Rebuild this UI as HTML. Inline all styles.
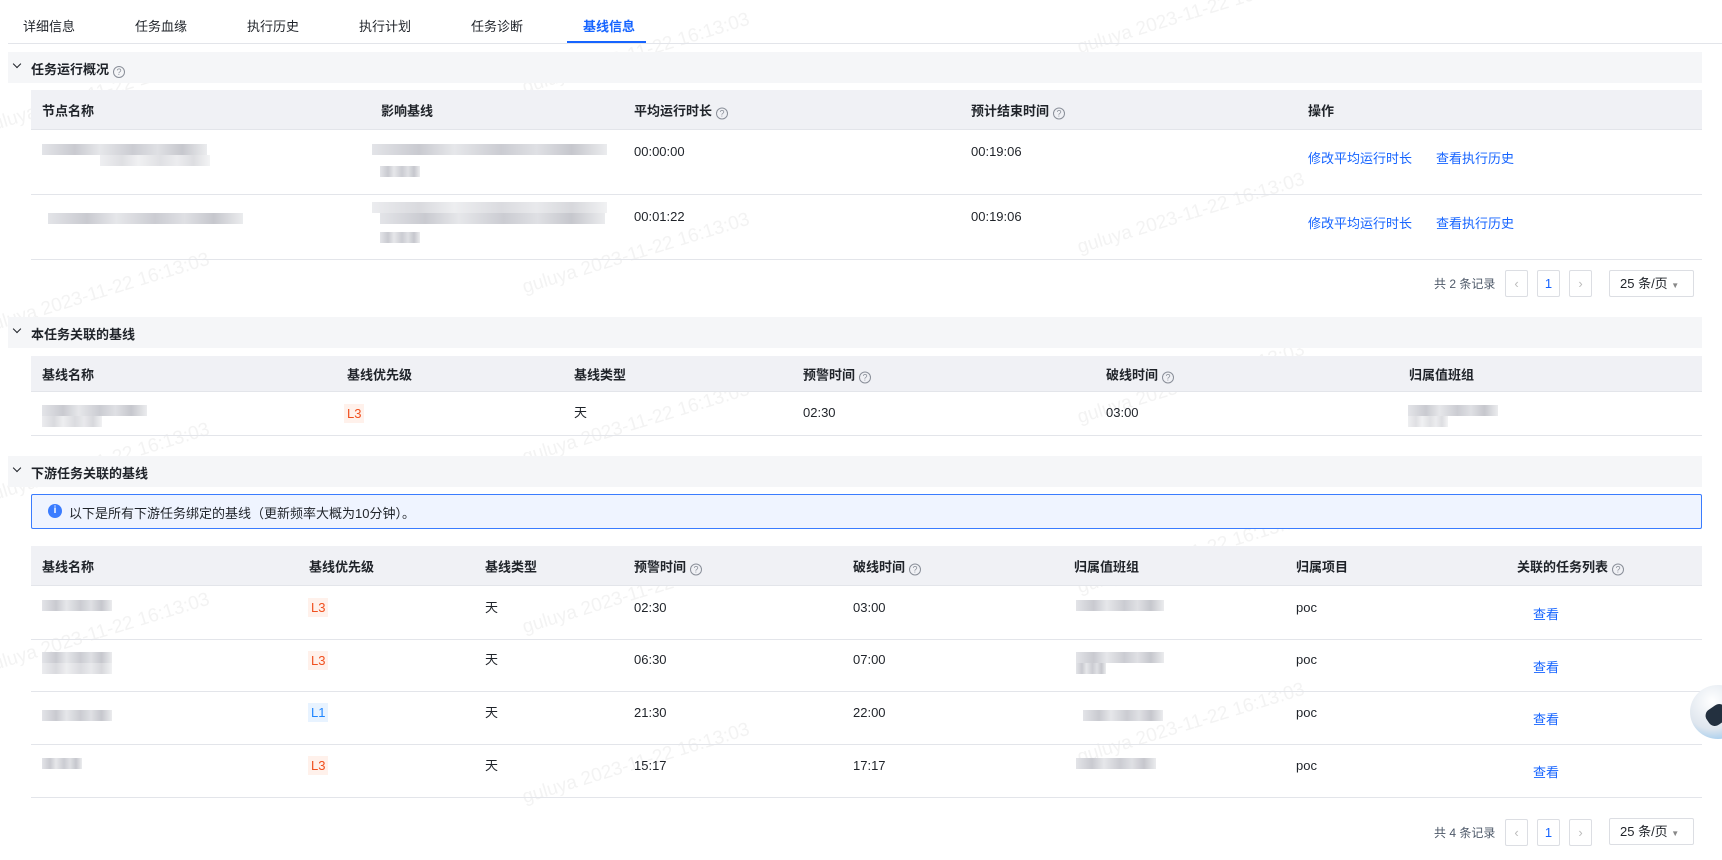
<!DOCTYPE html>
<html><head><meta charset="utf-8">
<style>
*{margin:0;padding:0;box-sizing:border-box}
body{width:1722px;height:860px;background:#fff;font-family:"Liberation Sans","Noto Sans CJK SC",sans-serif;font-size:13px;color:#1f2329;position:relative;overflow:hidden}
.a{position:absolute;white-space:nowrap}
.tab{position:absolute;top:16px;font-size:13px;color:#1f2329}
.band{position:absolute;left:8px;width:1694px;height:31px;background:#f5f6f8}
.band .t{position:absolute;left:23px;top:7px;font-size:13px;font-weight:600;color:#1f2329}
.chev{position:absolute;left:6px;top:9px;width:6px;height:6px;border-right:1.6px solid #1f2329;border-bottom:1.6px solid #1f2329;transform:rotate(45deg)}
.th{position:absolute;left:31px;width:1671px;background:#f0f1f5;border-bottom:1px solid #e3e5ea}
.th span{position:absolute;font-weight:600;font-size:13px;top:50%;transform:translateY(-50%)}
.line{position:absolute;left:31px;width:1671px;height:1px;background:#e3e5ea}
.q{display:inline-block;width:12px;height:12px;border:1px solid #8a8f99;border-radius:50%;font-size:9px;line-height:10px;text-align:center;color:#8a8f99;font-weight:400;vertical-align:-1px;margin-left:4px;font-style:normal}
.lnk{color:#1664ff}
.tag{position:absolute;padding:1px 3px;font-size:13px;line-height:17px}
.l3{background:#fff1eb;color:#f0501f}
.l1{background:#e8f3ff;color:#1f86ff}
.blur{position:absolute;height:11px;background:linear-gradient(90deg,#e3e4e8,#c9cad0 20%,#e6e7ea 35%,#cbccd2 55%,#dfe0e4 70%,#c6c7cd 85%,#ebecee)}
.pg{position:absolute;height:27px;border:1px solid #dcdee3;border-radius:2px;background:#fff;text-align:center;line-height:25px;color:#bbb}
.wm{position:absolute;color:#f3f3f3;font-size:19px;transform:rotate(-17deg);transform-origin:left top;white-space:nowrap}
.d{top:-3px;position:relative}
</style></head><body>

<div class="wm" style="left:-20px;top:118px">guluya 2023-11-22 16:13:03</div>
<div class="wm" style="left:520px;top:78px">guluya 2023-11-22 16:13:03</div>
<div class="wm" style="left:1075px;top:38px">guluya 2023-11-22 16:13:03</div>
<div class="wm" style="left:-20px;top:318px">guluya 2023-11-22 16:13:03</div>
<div class="wm" style="left:520px;top:278px">guluya 2023-11-22 16:13:03</div>
<div class="wm" style="left:1075px;top:238px">guluya 2023-11-22 16:13:03</div>
<div class="wm" style="left:-20px;top:488px">guluya 2023-11-22 16:13:03</div>
<div class="wm" style="left:520px;top:448px">guluya 2023-11-22 16:13:03</div>
<div class="wm" style="left:1075px;top:408px">guluya 2023-11-22 16:13:03</div>
<div class="wm" style="left:-20px;top:658px">guluya 2023-11-22 16:13:03</div>
<div class="wm" style="left:520px;top:618px">guluya 2023-11-22 16:13:03</div>
<div class="wm" style="left:1075px;top:578px">guluya 2023-11-22 16:13:03</div>
<div class="wm" style="left:520px;top:788px">guluya 2023-11-22 16:13:03</div>
<div class="wm" style="left:1075px;top:748px">guluya 2023-11-22 16:13:03</div>

<div class="tab" style="left:23px">详细信息</div>
<div class="tab" style="left:135px">任务血缘</div>
<div class="tab" style="left:247px">执行历史</div>
<div class="tab" style="left:359px">执行计划</div>
<div class="tab" style="left:471px">任务诊断</div>
<div class="tab" style="left:583px;color:#1664ff;font-weight:600">基线信息</div>
<div class="a" style="left:8px;top:43px;width:1714px;height:1px;background:#e3e5ea"></div>
<div class="a" style="left:567px;top:41px;width:79px;height:2px;background:#1664ff"></div>

<div class="band" style="top:52px"><div class="chev"></div><div class="t">任务运行概况<span class="q">?</span></div></div>
<div class="th" style="top:90px;height:40px">
<span style="left:11px">节点名称</span><span style="left:350px">影响基线</span><span style="left:603px">平均运行时长<i class="q">?</i></span><span style="left:940px">预计结束时间<i class="q">?</i></span><span style="left:1277px">操作</span></div>
<div class="blur" style="left:42px;top:144px;width:165px"></div>
<div class="blur" style="left:100px;top:155px;width:110px;opacity:.6"></div>
<div class="blur" style="left:372px;top:144px;width:235px"></div>
<div class="blur" style="left:380px;top:166px;width:40px"></div>
<div class="blur" style="left:48px;top:213px;width:195px"></div>
<div class="blur" style="left:372px;top:202px;width:235px;opacity:.7"></div>
<div class="blur" style="left:380px;top:213px;width:225px"></div>
<div class="blur" style="left:380px;top:232px;width:40px"></div>
<div class="a" style="left:634px;top:144px">00:00:00</div>
<div class="a" style="left:971px;top:144px">00:19:06</div>
<div class="a lnk" style="left:1308px;top:148px">修改平均运行时长</div>
<div class="a lnk" style="left:1436px;top:148px">查看执行历史</div>
<div class="line" style="top:194px"></div>
<div class="a" style="left:634px;top:209px">00:01:22</div>
<div class="a" style="left:971px;top:209px">00:19:06</div>
<div class="a lnk" style="left:1308px;top:213px">修改平均运行时长</div>
<div class="a lnk" style="left:1436px;top:213px">查看执行历史</div>
<div class="line" style="top:259px"></div>
<div class="a" style="left:1434px;top:275px;color:#4e5969;font-size:12px">共 2 条记录</div>
<div class="pg" style="left:1505px;top:270px;width:23px">&lsaquo;</div>
<div class="pg" style="left:1537px;top:270px;width:23px;color:#1664ff">1</div>
<div class="pg" style="left:1569px;top:270px;width:23px">&rsaquo;</div>
<div class="pg" style="left:1609px;top:270px;width:85px;color:#1f2329;text-align:left;padding-left:10px">25 条/页 <span style="font-size:8px;color:#888">▼</span></div>

<div class="band" style="top:317px"><div class="chev"></div><div class="t">本任务关联的基线</div></div>
<div class="th" style="top:356px;height:36px">
<span style="left:11px">基线名称</span><span style="left:316px">基线优先级</span><span style="left:543px">基线类型</span><span style="left:772px">预警时间<i class="q">?</i></span><span style="left:1075px">破线时间<i class="q">?</i></span><span style="left:1378px">归属值班组</span></div>
<div class="blur" style="left:42px;top:405px;width:105px"></div>
<div class="blur" style="left:42px;top:416px;width:60px;opacity:.7"></div>
<div class="tag l3" style="left:344px;top:404px">L3</div>
<div class="a" style="left:574px;top:402px">天</div>
<div class="a" style="left:803px;top:405px">02:30</div>
<div class="a" style="left:1106px;top:405px">03:00</div>
<div class="blur" style="left:1408px;top:405px;width:90px"></div>
<div class="blur" style="left:1408px;top:416px;width:40px;opacity:.6"></div>
<div class="line" style="top:435px"></div>

<div class="band" style="top:456px"><div class="chev"></div><div class="t">下游任务关联的基线</div></div>
<div class="a" style="left:31px;top:494px;width:1671px;height:35px;border:1px solid #3a7cff;background:#eff4ff;border-radius:2px"></div>
<div class="a" style="left:48px;top:504px;width:14px;height:14px;border-radius:50%;background:#3a7cff;color:#fff;font-size:10px;text-align:center;line-height:14px;font-weight:700">i</div>
<div class="a" style="left:69px;top:503px;color:#1f2329">以下是所有下游任务绑定的基线（更新频率大概为10分钟）。</div>
<div class="th" style="top:546px;height:40px">
<span style="left:11px">基线名称</span><span style="left:278px">基线优先级</span><span style="left:454px">基线类型</span><span style="left:603px">预警时间<i class="q">?</i></span><span style="left:822px">破线时间<i class="q">?</i></span><span style="left:1043px">归属值班组</span><span style="left:1265px">归属项目</span><span style="left:1486px">关联的任务列表<i class="q">?</i></span></div>

<div class="blur" style="left:42px;top:600px;width:70px"></div>
<div class="tag l3" style="left:308px;top:598px">L3</div>
<div class="a" style="left:485px;top:597px">天</div>
<div class="a" style="left:634px;top:600px">02:30</div>
<div class="a" style="left:853px;top:600px">03:00</div>
<div class="blur" style="left:1076px;top:600px;width:88px"></div>
<div class="a" style="left:1296px;top:600px">poc</div>
<div class="a lnk" style="left:1533px;top:604px">查看</div>
<div class="line" style="top:639px"></div>

<div class="blur" style="left:42px;top:652px;width:70px"></div>
<div class="blur" style="left:42px;top:663px;width:70px;opacity:.7"></div>
<div class="tag l3" style="left:308px;top:651px">L3</div>
<div class="a" style="left:485px;top:649px">天</div>
<div class="a" style="left:634px;top:652px">06:30</div>
<div class="a" style="left:853px;top:652px">07:00</div>
<div class="blur" style="left:1076px;top:652px;width:88px"></div>
<div class="blur" style="left:1076px;top:663px;width:30px"></div>
<div class="a" style="left:1296px;top:652px">poc</div>
<div class="a lnk" style="left:1533px;top:657px">查看</div>
<div class="line" style="top:691px"></div>

<div class="blur" style="left:42px;top:710px;width:70px"></div>
<div class="tag l1" style="left:308px;top:703px">L1</div>
<div class="a" style="left:485px;top:702px">天</div>
<div class="a" style="left:634px;top:705px">21:30</div>
<div class="a" style="left:853px;top:705px">22:00</div>
<div class="blur" style="left:1083px;top:710px;width:80px"></div>
<div class="a" style="left:1296px;top:705px">poc</div>
<div class="a lnk" style="left:1533px;top:709px">查看</div>
<div class="line" style="top:744px"></div>

<div class="blur" style="left:42px;top:758px;width:40px"></div>
<div class="tag l3" style="left:308px;top:756px">L3</div>
<div class="a" style="left:485px;top:755px">天</div>
<div class="a" style="left:634px;top:758px">15:17</div>
<div class="a" style="left:853px;top:758px">17:17</div>
<div class="blur" style="left:1076px;top:758px;width:80px"></div>
<div class="a" style="left:1296px;top:758px">poc</div>
<div class="a lnk" style="left:1533px;top:762px">查看</div>
<div class="line" style="top:797px"></div>

<div class="a" style="left:1434px;top:824px;color:#4e5969;font-size:12px">共 4 条记录</div>
<div class="pg" style="left:1505px;top:819px;width:23px">&lsaquo;</div>
<div class="pg" style="left:1537px;top:819px;width:23px;color:#1664ff">1</div>
<div class="pg" style="left:1569px;top:819px;width:23px">&rsaquo;</div>
<div class="pg" style="left:1609px;top:818px;width:85px;color:#1f2329;text-align:left;padding-left:10px">25 条/页 <span style="font-size:8px;color:#888">▼</span></div>

<div class="a" style="left:1690px;top:685px;width:56px;height:54px;border-radius:50%;background:radial-gradient(circle at 40% 30%,#ffffff,#dfe6ee 55%,#8cc3ee 90%)"></div>
<div class="a" style="left:1706px;top:706px;width:22px;height:18px;border-radius:7px;background:#23303f;transform:rotate(-35deg)"></div>
</body></html>
